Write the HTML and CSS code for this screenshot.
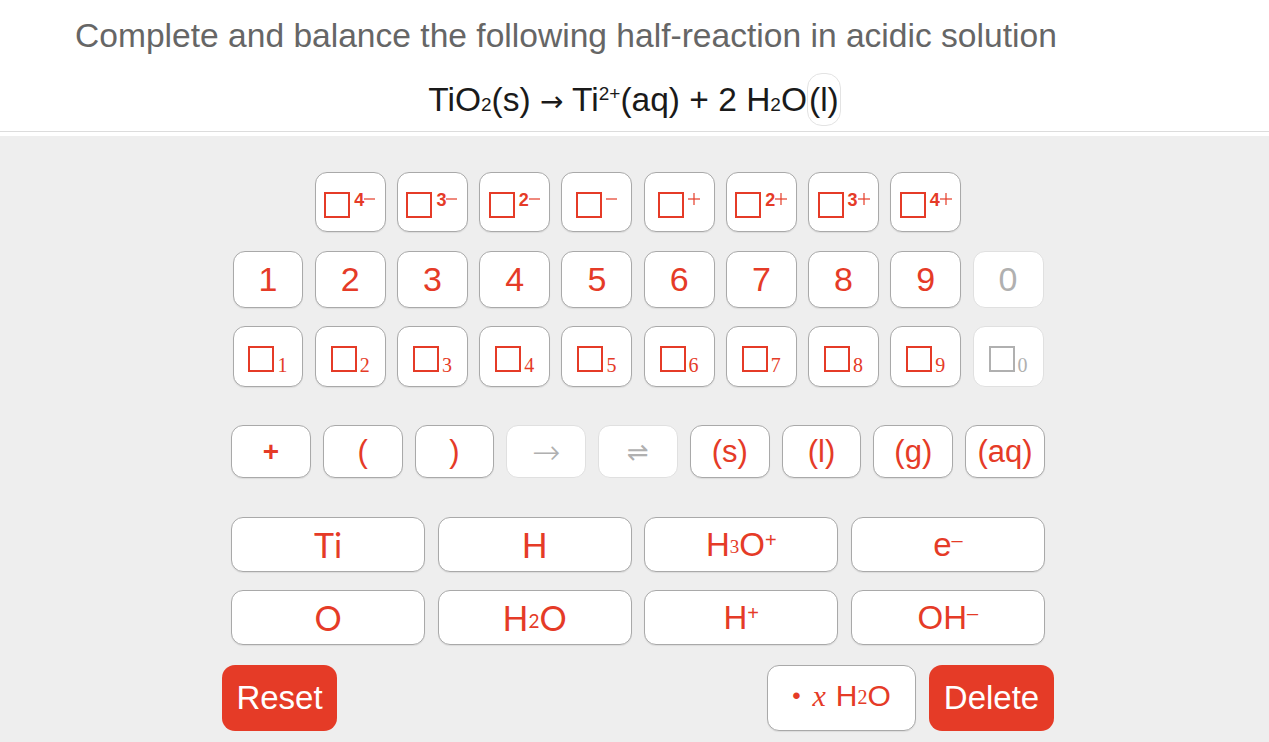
FILE: index.html
```html
<!DOCTYPE html>
<html>
<head>
<meta charset="utf-8">
<link rel="stylesheet" href="styles.css">
</head>
<body>
<header class="head">
  <div class="title">Complete and balance the following half-reaction in acidic solution</div>
  <div class="eq">TiO<span class="esub">2</span>(s) <span class="earr">→</span> Ti<span class="esup">2+</span>(aq) + 2 H<span class="esub">2</span>O<span class="cur">(l)</span></div>
</header>
<main class="panel">
  <div class="pad">
    <div class="keys">
      <div class="grid10 row1">
        <button class="k c2"><span class="cg"><span class="sq"></span><span class="chg">4</span><svg class="sign" width="12" height="12" viewBox="0 0 12 12"><line x1="0" y1="6" x2="11" y2="6"/></svg></span></button>
        <button class="k"><span class="cg"><span class="sq"></span><span class="chg">3</span><svg class="sign" width="12" height="12" viewBox="0 0 12 12"><line x1="0" y1="6" x2="11" y2="6"/></svg></span></button>
        <button class="k"><span class="cg"><span class="sq"></span><span class="chg">2</span><svg class="sign" width="12" height="12" viewBox="0 0 12 12"><line x1="0" y1="6" x2="11" y2="6"/></svg></span></button>
        <button class="k"><span class="cg"><span class="sq"></span><svg class="sign sp" width="12" height="12" viewBox="0 0 12 12"><line x1="0" y1="6" x2="11" y2="6"/></svg></span></button>
        <button class="k"><span class="cg"><span class="sq"></span><svg class="sign sp" width="12" height="12" viewBox="0 0 12 12"><line x1="0" y1="6" x2="12" y2="6"/><line x1="6" y1="0" x2="6" y2="12"/></svg></span></button>
        <button class="k"><span class="cg"><span class="sq"></span><span class="chg">2</span><svg class="sign" width="12" height="12" viewBox="0 0 12 12"><line x1="0" y1="6" x2="12" y2="6"/><line x1="6" y1="0" x2="6" y2="12"/></svg></span></button>
        <button class="k"><span class="cg"><span class="sq"></span><span class="chg">3</span><svg class="sign" width="12" height="12" viewBox="0 0 12 12"><line x1="0" y1="6" x2="12" y2="6"/><line x1="6" y1="0" x2="6" y2="12"/></svg></span></button>
        <button class="k"><span class="cg"><span class="sq"></span><span class="chg">4</span><svg class="sign" width="12" height="12" viewBox="0 0 12 12"><line x1="0" y1="6" x2="12" y2="6"/><line x1="6" y1="0" x2="6" y2="12"/></svg></span></button>
      </div>
      <div class="grid10 row2">
        <button class="k num">1</button>
        <button class="k num">2</button>
        <button class="k num">3</button>
        <button class="k num">4</button>
        <button class="k num">5</button>
        <button class="k num">6</button>
        <button class="k num">7</button>
        <button class="k num">8</button>
        <button class="k num">9</button>
        <button class="k num off">0</button>
      </div>
      <div class="grid10 row3">
        <button class="k"><span class="cg sb"><span class="sq"></span><span class="sd">1</span></span></button>
        <button class="k"><span class="cg sb"><span class="sq"></span><span class="sd">2</span></span></button>
        <button class="k"><span class="cg sb"><span class="sq"></span><span class="sd">3</span></span></button>
        <button class="k"><span class="cg sb"><span class="sq"></span><span class="sd">4</span></span></button>
        <button class="k"><span class="cg sb"><span class="sq"></span><span class="sd">5</span></span></button>
        <button class="k"><span class="cg sb"><span class="sq"></span><span class="sd">6</span></span></button>
        <button class="k"><span class="cg sb"><span class="sq"></span><span class="sd">7</span></span></button>
        <button class="k"><span class="cg sb"><span class="sq"></span><span class="sd">8</span></span></button>
        <button class="k"><span class="cg sb"><span class="sq"></span><span class="sd">9</span></span></button>
        <button class="k off"><span class="cg sb"><span class="sq"></span><span class="sd">0</span></span></button>
      </div>
      <div class="grid9 row4">
        <button class="k plus">+</button>
        <button class="k paren">(</button>
        <button class="k paren">)</button>
        <button class="k off arrow">→</button>
        <button class="k off eqm">⇌</button>
        <button class="k">(s)</button>
        <button class="k">(l)</button>
        <button class="k">(g)</button>
        <button class="k">(aq)</button>
      </div>
      <div class="grid4 row5">
        <button class="k el lato">Ti</button>
        <button class="k el lato">H</button>
        <button class="k el">H<span class="lsub">3</span>O<span class="lsup">+</span></button>
        <button class="k el">e<span class="lsup">–</span></button>
      </div>
      <div class="grid4 row6">
        <button class="k el lato">O</button>
        <button class="k el lato">H<span class="lsub">2</span>O</button>
        <button class="k el">H<span class="lsup">+</span></button>
        <button class="k el">OH<span class="lsup">–</span></button>
      </div>
    </div>
    <div class="actions">
      <button class="btn red">Reset</button>
      <div class="right">
        <button class="k water"><span class="dot">•</span><span class="xi">x</span>H<span class="wsub">2</span>O</button>
        <button class="btn red del">Delete</button>
      </div>
    </div>
  </div>
</main>
</body>
</html>
```
FILE: styles.css
```css
html, body {
  margin: 0;
  padding: 0;
  background: #fff;
  overflow: hidden;
}
body {
  font-family: "Liberation Sans", Arial, sans-serif;
}
.head {
  border-bottom: 1px solid #dcdcdc;
  padding-bottom: 11px;
  margin-bottom: 4px;
}
.title {
  font-size: 33.6px;
  line-height: 40px;
  color: #666;
  padding: 16px 0 0 75px;
  white-space: nowrap;
}
.eq {
  margin-top: 24px;
  font-size: 33.5px;
  line-height: 40px;
  height: 40px;
  color: #1a1a1a;
  text-align: center;
  white-space: nowrap;
}
.esub {
  font-size: 19px;
}
.esup {
  font-size: 19px;
  vertical-align: 11px;
  line-height: 0;
}
.earr {
  font-family: "DejaVu Sans", sans-serif;
  font-size: 28px;
}
.cur {
  border: 1px solid #e3e3e3;
  border-radius: 15px;
  padding: 7px 1px;
}
.panel {
  background: #eeeeee;
  padding: 36px 0 12px;
}
.pad {
  width: 832px;
  margin-left: 222px;
}
.keys {
  margin: 0 9px;
}
.k {
  box-sizing: border-box;
  background: #fff;
  border: 1px solid #a9a9a9;
  border-radius: 12px;
  box-shadow: 0 1px 1px rgba(0, 0, 0, 0.08);
  color: #e53b27;
  font-family: "Liberation Sans", Arial, sans-serif;
  padding: 0;
  margin: 0;
  display: flex;
  align-items: center;
  justify-content: center;
  white-space: nowrap;
}
.k.off {
  border-color: #e0e0e0;
  box-shadow: none;
  color: #b0b0b0;
}
.grid10 {
  display: grid;
  grid-template-columns: repeat(10, 1fr);
  column-gap: 11.3px;
  padding: 0 1.5px;
}
.grid9 {
  display: grid;
  grid-template-columns: repeat(9, 1fr);
  column-gap: 11.8px;
}
.grid4 {
  display: grid;
  grid-template-columns: repeat(4, 1fr);
  column-gap: 12.4px;
}
.cg {
  display: inline-flex;
  align-items: flex-start;
  height: 26px;
}
.cg.sb {
  align-items: flex-end;
}
.sq {
  flex: none;
  display: block;
  box-sizing: border-box;
  width: 26px;
  height: 26px;
  border: 2px solid currentColor;
}
.row1 .k { height: 60px; padding-top: 5px; }
.row1 .c2 { grid-column-start: 2; }
.chg {
  font-weight: bold;
  font-size: 18px;
  line-height: 14px;
  margin: 1px 0 0 4px;
}
.sign {
  flex: none;
  margin-top: 1px;
  stroke: currentColor;
  stroke-width: 1.2;
}
.sign.sp { margin-left: 4px; }
.row2 { margin-top: 19px; }
.row2 .k { height: 57px; font-size: 34px; }
.row3 { margin-top: 18px; }
.row3 .k { height: 61px; padding-top: 5px; }
.sd {
  font-family: "Liberation Serif", "Times New Roman", serif;
  font-size: 20px;
  line-height: 14px;
  margin-left: 3px;
}
.row4 { margin-top: 38px; }
.row4 .k { height: 53px; font-size: 31px; }
.row4 .plus { font-size: 28px; font-weight: bold; }
.row4 .paren { font-weight: 300; }
.row4 .arrow { font-family: "DejaVu Sans", sans-serif; font-size: 34px; font-weight: 300; }
.row4 .eqm { font-family: "DejaVu Sans", sans-serif; font-size: 26px; }
.row5 { margin-top: 39px; }
.row6 { margin-top: 18px; }
.el { height: 55px; font-size: 33px; }
.lato { font-family: Lato, "Liberation Sans", sans-serif; font-size: 34px; }
.lsub {
  font-family: "Liberation Serif", serif;
  font-size: 19px;
  align-self: flex-end;
  margin-bottom: 13px;
}
.lato .lsub { font-family: Lato, sans-serif; margin-bottom: 12px; }
.lsup {
  font-size: 20px;
  align-self: flex-start;
  margin-top: 11px;
}
.actions {
  margin-top: 20px;
  display: flex;
  justify-content: space-between;
  align-items: center;
}
.right {
  display: flex;
  gap: 13px;
}
.btn {
  box-sizing: border-box;
  height: 66px;
  border: none;
  border-radius: 13px;
  font-family: "Liberation Sans", Arial, sans-serif;
  font-size: 33px;
  padding: 0;
}
.red {
  background: #e53b27;
  color: #fff;
  width: 115px;
}
.del { width: 125px; }
.water {
  width: 149px;
  height: 66px;
  font-size: 30px;
  padding-bottom: 4px;
}
.dot { font-size: 24px; margin-right: 12px; }
.xi {
  font-family: "Liberation Serif", serif;
  font-style: italic;
  font-size: 30px;
  margin-right: 10px;
}
.wsub {
  font-family: "Liberation Serif", serif;
  font-size: 20px;
  align-self: flex-end;
  margin-bottom: 17px;
}
```
